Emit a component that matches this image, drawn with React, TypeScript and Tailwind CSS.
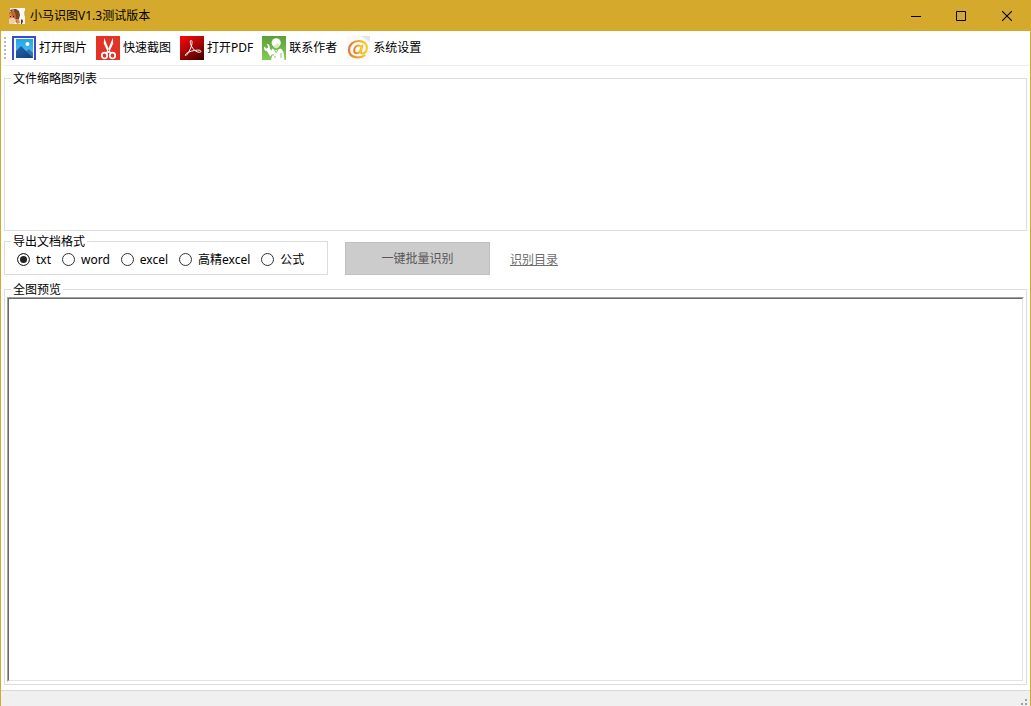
import { useState } from "react";
import type { ReactNode } from "react";

function HorseLogo() {
  return (
    <svg width="16" height="16" viewBox="0 0 16 16" aria-hidden="true">
      <rect width="16" height="16" fill="#fbf8f2" />
      <path d="M0 0h1v5H0z" fill="#d4a92c" />
      <path d="M1 2l3-1 3 0 3 2 1 4-1 4-2 4-3-3z" fill="#7b4526" />
      <path d="M0 5l3-2 3 1 1 4v4H0z" fill="#b9682f" />
      <path d="M0 6l2-1 1 3 2 2-1 2H0z" fill="#dd8a47" />
      <path d="M3 1l1-1 1 3-1 1z" fill="#e39a5d" />
      <path d="M0 11l2-1 3 0 2 2-1 3-2 1H0z" fill="#f2cfa4" />
      <path d="M1 8h1v1H1zM4 8h1v1H4z" fill="#2f170b" />
      <path d="M7 11h3l1 4-3 1z" fill="#d98b52" />
      <path d="M12 12l1-1 1 2-1 3h-1z" fill="#54352a" />
      <path d="M15 3h1v6l-1-2z" fill="#c8bcb2" />
    </svg>
  );
}

function PictureIcon() {
  return (
    <svg width="24" height="24" viewBox="0 0 24 24" aria-hidden="true">
      <defs>
        <linearGradient id="sky" x1="0" y1="0" x2="0" y2="1">
          <stop offset="0" stopColor="#1fa4ea" />
          <stop offset="1" stopColor="#5cc4f2" />
        </linearGradient>
        <linearGradient id="hill" x1="0" y1="0" x2="1" y2="1">
          <stop offset="0" stopColor="#2166ad" />
          <stop offset="1" stopColor="#143b78" />
        </linearGradient>
      </defs>
      <rect width="24" height="24" fill="#3e48cc" />
      <rect x="2" y="2" width="20" height="22" fill="#f5f8fc" />
      <rect x="4" y="3" width="17" height="19" fill="url(#sky)" />
      <path d="M12 17l5-4 4 4v5h-9z" fill="#2c72b4" />
      <path d="M4 15l5-5 12 12H4z" fill="url(#hill)" />
      <circle cx="15.500" cy="8" r="2" fill="#fff" />
    </svg>
  );
}

function ScissorsIcon() {
  return (
    <svg width="24" height="24" viewBox="0 0 24 24" aria-hidden="true">
      <rect width="24" height="24" fill="#e13427" />
      <path d="M8.200 2l5.800 14-1.800 1-4.400-9.500z" fill="#fff" />
      <path d="M16.800 2L11 16l1.800 1 4.400-9.500z" fill="#fff" />
      <g fill="none" stroke="#fff" strokeWidth="1.700">
        <ellipse cx="8.500" cy="19.600" rx="2.700" ry="2.900" />
        <ellipse cx="16.500" cy="19.600" rx="2.700" ry="2.900" />
      </g>
      <path d="M10 17.500l2.500-3 2.500 3" fill="none" stroke="#fff" strokeWidth="1.500" />
      <circle cx="12.500" cy="14.300" r="0.700" fill="#e13427" />
    </svg>
  );
}

function PdfIcon() {
  return (
    <svg width="24" height="24" viewBox="0 0 24 24" aria-hidden="true">
      <defs>
        <linearGradient id="pdf" x1="0.200" y1="0" x2="0.800" y2="1">
          <stop offset="0" stopColor="#ee0a0a" />
          <stop offset="0.450" stopColor="#b00505" />
          <stop offset="1" stopColor="#480202" />
        </linearGradient>
      </defs>
      <rect width="24" height="24" fill="url(#pdf)" />
      <path
        d="M11.500 4.500c-2-.8-1.300 3.500.3 6.200 1.600 2.800 4.500 5.700 7.600 5.600 2.800-.2 1.800-2.400-1.700-2.200-4.200.2-8.700 1.400-11.200 3.300-2.400 1.900-.9 3.100.7 1 2.200-3 4.400-7.800 4.800-10.900.2-1.600 0-2.800-.5-3z"
        fill="none"
        stroke="#fff"
        strokeWidth="1"
      />
    </svg>
  );
}

function ContactIcon() {
  return (
    <svg width="24" height="24" viewBox="0 0 24 24" aria-hidden="true">
      <defs>
        <linearGradient id="leaf" x1="0" y1="0" x2="0" y2="1">
          <stop offset="0" stopColor="#5c9f38" />
          <stop offset="1" stopColor="#83cb55" />
        </linearGradient>
      </defs>
      <rect width="24" height="24" fill="url(#leaf)" />
      <circle cx="14.200" cy="6.800" r="4.600" fill="#fff" />
      <path d="M11 9.500c1.800-.2 3.500-1.200 4.300-2.500.6 1 1.500 1.600 2.300 1.800-.4 2.200-1.800 3.600-3.400 3.600S11.400 11.300 11 9.500z" fill="#d7ecca" />
      <path d="M10 12.500l4 2 4.500-2c2 1 3 3 3.300 5.500L22.500 24H9l1.500-6-2.300 2.500-3.200-5.300c-2.600-.2-3.600-2.600-2.700-4.700l2 2 1.700-.8L5.700 9.500 4.500 8c2.500 0 3.800 2 3.300 4.300L9.500 15z" fill="#fff" />
      <path d="M12.500 14l1.700 2.500L16 14M19 17v5M11 18v2" fill="none" stroke="#72b84a" strokeWidth="0.800" />
      <circle cx="13" cy="21" r="0.800" fill="#72b84a" />
    </svg>
  );
}

function SettingsIcon() {
  return (
    <svg width="24" height="24" viewBox="0 0 24 24" aria-hidden="true">
      <defs>
        <linearGradient id="at" x1="0" y1="0" x2="1" y2="0">
          <stop offset="0" stopColor="#e07c34" />
          <stop offset="1" stopColor="#f7d02c" />
        </linearGradient>
      </defs>
      <rect width="24" height="24" fill="#fafafa" />
      <path d="M15 0h9v6z" fill="#e5e5e5" />
      <g fill="none" stroke="url(#at)" strokeLinecap="round">
        <path d="M18.500 19.300c-2.200 1.700-5 2.300-7.800 2C6 20.800 2.900 18 3 13.700 3.200 8.600 7.400 5 12.700 5c4.800 0 8.300 2.800 8.200 7 0 3.300-2.200 5.600-4.400 5.500-1.600 0-1.900-1.200-1.500-2.800l1.300-5.200" strokeWidth="2.200" />
        <path d="M15.300 11.500c-.4-1.400-1.500-2-2.800-1.900-2.400.2-4.300 2.500-4.300 5 0 1.700.9 2.700 2.300 2.700 2.100 0 4.200-2.200 4.800-5.800z" strokeWidth="2" />
      </g>
    </svg>
  );
}

const tools = [
  { label: "打开图片", icon: <PictureIcon /> },
  { label: "快速截图", icon: <ScissorsIcon /> },
  { label: "打开PDF", icon: <PdfIcon /> },
  { label: "联系作者", icon: <ContactIcon /> },
  { label: "系统设置", icon: <SettingsIcon /> },
];

const formats = ["txt", "word", "excel", "高精excel", "公式"];

function Panel({ title, className, children }: { title: string; className: string; children?: ReactNode }) {
  return (
    <section className={`flex flex-col border border-[#dcdcdc] ${className}`}>
      <h2 className="-mt-[9px] ml-1.5 h-4 w-fit bg-white px-0.5 leading-[18px]">{title}</h2>
      {children}
    </section>
  );
}

function TitleBar() {
  return (
    <header className="flex h-[31px] shrink-0 items-center bg-[#d4a92c] pl-2">
      <HorseLogo />
      <h1 className="ml-[5px] flex-1 leading-4">小马识图V1.3测试版本</h1>
      <button aria-label="最小化" className="flex h-full w-[45px] items-center justify-center">
        <svg width="10" height="10" viewBox="0 0 10 10"><path d="M0 5.500h10" stroke="#000" /></svg>
      </button>
      <button aria-label="最大化" className="flex h-full w-[46px] items-center justify-center">
        <svg width="10" height="10" viewBox="0 0 10 10"><path d="M.5.5h9v9h-9z" fill="none" stroke="#000" /></svg>
      </button>
      <button aria-label="关闭" className="flex h-full w-[46px] items-center justify-center">
        <svg width="10" height="10" viewBox="0 0 10 10"><path d="M0 0l10 10M10 0L0 10" stroke="#000" strokeWidth="1.100" /></svg>
      </button>
    </header>
  );
}

export default function App() {
  const [format, setFormat] = useState("txt");

  return (
    <div className="flex min-h-screen flex-col border-x border-[#d4a92c] bg-white font-['Noto_Sans','Noto_Sans_CJK_SC',sans-serif] text-xs text-black">
      <TitleBar />

      <nav className="flex h-[35px] shrink-0 items-center rounded-b-sm border-b border-[#ededed] pl-[3px]">
        <div className="mr-1.5 flex flex-col gap-0.5" aria-hidden="true">
          {[0, 1, 2, 3, 4, 5].map((dot) => (
            <span key={dot} className="size-0.5 bg-[#b8b8b8]" />
          ))}
        </div>
        <div className="flex gap-[9px]">
          {tools.map((tool) => (
            <button key={tool.label} className="flex items-center gap-[3px] leading-4">
              {tool.icon}
              {tool.label}
            </button>
          ))}
        </div>
      </nav>

      <main className="flex flex-1 flex-col px-[3px] pt-3 pb-[5px]">
        <Panel title="文件缩略图列表" className="h-[153px]" />

        <div className="mt-0.5 flex items-end">
          <fieldset className="h-[42px] w-[324px] border border-[#dcdcdc]">
            <legend className="ml-1.5 h-4 px-0.5 leading-[18px]">导出文档格式</legend>
            <div className="flex gap-[11px] pl-3">
              {formats.map((name) => (
                <label key={name} className="flex items-center gap-1.5">
                  <input
                    type="radio"
                    name="format"
                    value={name}
                    checked={format === name}
                    onChange={() => setFormat(name)}
                    className="size-[13px] appearance-none rounded-full border border-[#333] bg-white checked:bg-[#222] checked:shadow-[inset_0_0_0_2px_#fff]"
                  />
                  <span className="h-5 leading-[22px]">{name}</span>
                </label>
              ))}
            </div>
          </fieldset>
          <button disabled className="ml-[17px] h-[33px] w-[145px] border border-[#bfbfbf] bg-[#ccc] text-[#5a5558]">
            一键批量识别
          </button>
          <a href="#catalog" className="mb-[5px] ml-5 leading-5 text-[#6d6d6d] underline">
            识别目录
          </a>
        </div>

        <Panel title="全图预览" className="mt-3.5 flex-1">
          <div className="mx-0.5 mb-0.5 flex flex-1 border border-t-[#a0a0a0] border-r-white border-b-white border-l-[#a0a0a0]">
            <div className="flex-1 border border-t-[#696969] border-r-[#e3e3e3] border-b-[#e3e3e3] border-l-[#696969]" />
          </div>
        </Panel>
      </main>

      <footer className="flex h-4 shrink-0 items-end justify-end border-t border-[#d7d7d7] bg-[#f0f0f0] pr-[3px]">
        <svg width="6" height="7" viewBox="0 0 6 7" aria-hidden="true">
          <path d="M4 0h2v2H4zM0 4h2v2H0zM4 4h2v2H4z" fill="#a0a0a0" />
        </svg>
      </footer>
    </div>
  );
}
